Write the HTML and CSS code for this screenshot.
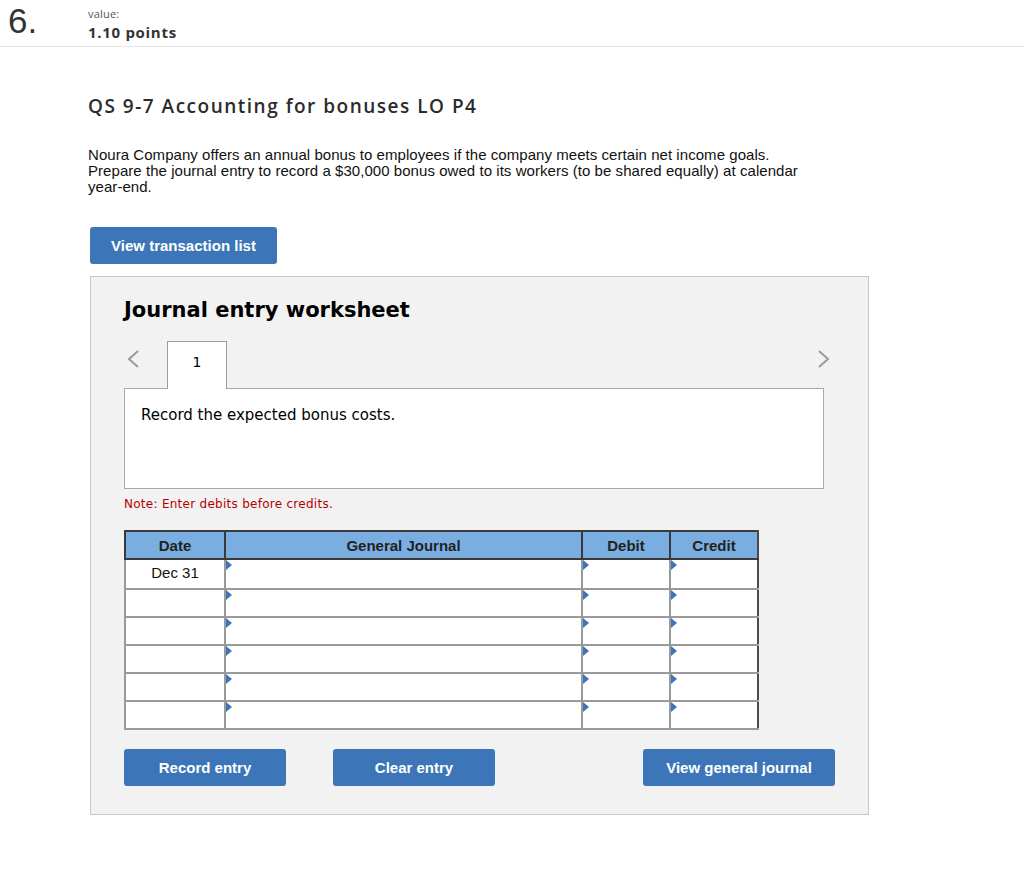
FILE: index.html
```html
<!DOCTYPE html>
<html>
<head>
<meta charset="utf-8">
<link rel="stylesheet" href="styles.css">
</head>
<body>
<div class="qhead">
  <div class="qnum">6.</div>
  <div class="qval">
    <div class="vlabel">value:</div>
    <div class="vpoints">1.10 points</div>
  </div>
</div>
<div class="main">
  <h1 class="title">QS 9-7 Accounting for bonuses LO P4</h1>
  <p class="desc">Noura Company offers an annual bonus to employees if the company meets certain net income goals. Prepare the journal entry to record a $30,000 bonus owed to its workers (to be shared equally) at calendar year-end.</p>
  <button class="btn btn-list">View transaction list</button>
  <div class="panel">
    <h2 class="ws-title">Journal entry worksheet</h2>
    <div class="tabs">
      <span class="arrow">
        <svg width="14" height="20" viewBox="0 0 14 20"><path d="M12 2 L3 10 L12 18" fill="none" stroke="#9a9a9a" stroke-width="2"/></svg>
      </span>
      <div class="tab">1</div>
      <span class="arrow arrow-right">
        <svg width="14" height="20" viewBox="0 0 14 20"><path d="M2 2 L11 10 L2 18" fill="none" stroke="#9a9a9a" stroke-width="2"/></svg>
      </span>
    </div>
    <div class="tabbox">Record the expected bonus costs.</div>
    <div class="note">Note: Enter debits before credits.</div>
    <table class="journal">
      <thead>
        <tr><th class="c-date">Date</th><th class="c-gj">General Journal</th><th class="c-dr">Debit</th><th class="c-cr">Credit</th></tr>
      </thead>
      <tbody>
        <tr class="first"><td class="c-date">Dec 31</td><td class="mk"></td><td class="mk"></td><td class="mk"></td></tr>
        <tr><td class="c-date"></td><td class="mk"></td><td class="mk"></td><td class="mk"></td></tr>
        <tr><td class="c-date"></td><td class="mk"></td><td class="mk"></td><td class="mk"></td></tr>
        <tr><td class="c-date"></td><td class="mk"></td><td class="mk"></td><td class="mk"></td></tr>
        <tr><td class="c-date"></td><td class="mk"></td><td class="mk"></td><td class="mk"></td></tr>
        <tr><td class="c-date"></td><td class="mk"></td><td class="mk"></td><td class="mk"></td></tr>
      </tbody>
    </table>
    <div class="actions">
      <button class="btn btn-rec">Record entry</button>
      <button class="btn btn-clear">Clear entry</button>
      <button class="btn btn-view">View general journal</button>
    </div>
  </div>
</div>
</body>
</html>
```

FILE: styles.css
```css
html, body {
  margin: 0;
  padding: 0;
  background: #fff;
}
body {
  font-family: "Liberation Sans", Arial, sans-serif;
  color: #222;
}
.qhead {
  display: flex;
  align-items: flex-start;
  height: 46px;
  border-bottom: 1px solid #e6e6e6;
}
.qnum {
  width: 88px;
  padding-left: 8px;
  box-sizing: border-box;
  font-family: "Liberation Sans", Arial, sans-serif;
  font-weight: 400;
  font-size: 35px;
  line-height: 44px;
  color: #333;
  margin-top: -1px;
}
.qval {
  padding-top: 7px;
}
.vlabel {
  font-family: "Open Sans", sans-serif;
  font-size: 11px;
  line-height: 13px;
  color: #555;
  letter-spacing: 0.2px;
}
.vpoints {
  font-family: "Open Sans", sans-serif;
  font-weight: 700;
  font-size: 15px;
  line-height: 20px;
  color: #333;
  letter-spacing: 0.7px;
  margin-top: 2px;
}
.main {
  padding-left: 88px;
}
.title {
  font-family: "Open Sans", sans-serif;
  font-weight: 600;
  font-size: 19px;
  letter-spacing: 1.5px;
  color: #2b2b2b;
  margin: 0;
  padding-top: 46px;
  line-height: 26px;
}
.desc {
  margin: 0;
  padding-top: 28px;
  width: 730px;
  font-size: 15px;
  line-height: 16px;
  letter-spacing: 0.05px;
  color: #111;
}
.btn {
  display: block;
  border: none;
  border-radius: 3px;
  background: #3c76b8;
  color: #fff;
  font-family: "Liberation Sans", Arial, sans-serif;
  font-weight: 700;
  font-size: 15px;
  height: 37px;
  padding: 0;
}
.btn-list {
  margin: 32px 0 0 2px;
  width: 187px;
}
.panel {
  margin: 12px 0 0 2px;
  width: 744px;
  height: 537px;
  background: #f2f2f2;
  border: 1px solid #c8c8c8;
  padding: 0 0 0 33px;
  box-sizing: content-box;
}
.ws-title {
  margin: 0;
  padding-top: 19px;
  font-family: "DejaVu Sans", Verdana, sans-serif;
  font-weight: 700;
  font-size: 21px;
  line-height: 28px;
  color: #000;
}
.tabs {
  display: flex;
  align-items: flex-start;
  margin-top: 17px;
  width: 700px;
  height: 47px;
}
.arrow {
  display: block;
  width: 43px;
  padding-top: 8px;
  padding-left: 2px;
  box-sizing: border-box;
}
.arrow-right {
  margin-left: auto;
  width: 14px;
  padding-left: 0;
  margin-right: -7px;
}
.tab {
  width: 60px;
  height: 48px;
  background: #fff;
  border: 1px solid #9c9c9c;
  border-bottom: none;
  box-sizing: border-box;
  text-align: center;
  font-family: "DejaVu Sans", Verdana, sans-serif;
  font-size: 14px;
  line-height: 40px;
  color: #000;
  position: relative;
  z-index: 1;
  margin-bottom: -1px;
}
.tabbox {
  width: 700px;
  height: 101px;
  background: #fff;
  border: 1px solid #a9a9a9;
  box-sizing: border-box;
  padding: 17px 0 0 16px;
  font-family: "DejaVu Sans", Verdana, sans-serif;
  font-size: 15px;
  line-height: 18px;
  color: #000;
}
.note {
  margin-top: 8px;
  font-family: "DejaVu Sans", Verdana, sans-serif;
  font-size: 12px;
  line-height: 15px;
  letter-spacing: 0.27px;
  color: #b30000;
}
.journal {
  margin-top: 18px;
  border-collapse: collapse;
  background: #fff;
}
.journal th {
  background: #7aaee1;
  border: 2px solid #3a3a3a;
  height: 28px;
  padding: 0;
  font-family: "Liberation Sans", Arial, sans-serif;
  font-weight: 700;
  font-size: 15px;
  color: #222;
  box-sizing: border-box;
}
.journal td {
  border: 2px solid #9a9a9a;
  height: 28px;
  padding: 0;
  box-sizing: border-box;
  font-size: 15px;
  color: #111;
  text-align: center;
}
.journal tr.first td {
  height: 30px;
}
.journal tr.first td.c-date {
  padding-bottom: 3px;
}
.journal tbody tr:first-child td {
  border-top-color: #3a3a3a;
}
.journal td:last-child, .journal th:last-child {
  border-right-color: #4a4a4a;
}
.c-date { width: 100px; }
.c-gj { width: 357px; }
.c-dr { width: 88px; }
.c-cr { width: 88px; }
.mk {
  position: relative;
}
.mk::before {
  content: "";
  position: absolute;
  left: 0;
  top: 0;
  width: 0;
  height: 0;
  border-top: 5px solid transparent;
  border-bottom: 5px solid transparent;
  border-left: 6px solid #3c76b8;
}
.actions {
  display: flex;
  margin-top: 19px;
}
.btn-rec {
  width: 162px;
}
.btn-clear {
  width: 162px;
  margin-left: 47px;
}
.btn-view {
  width: 192px;
  margin-left: 148px;
}
```
